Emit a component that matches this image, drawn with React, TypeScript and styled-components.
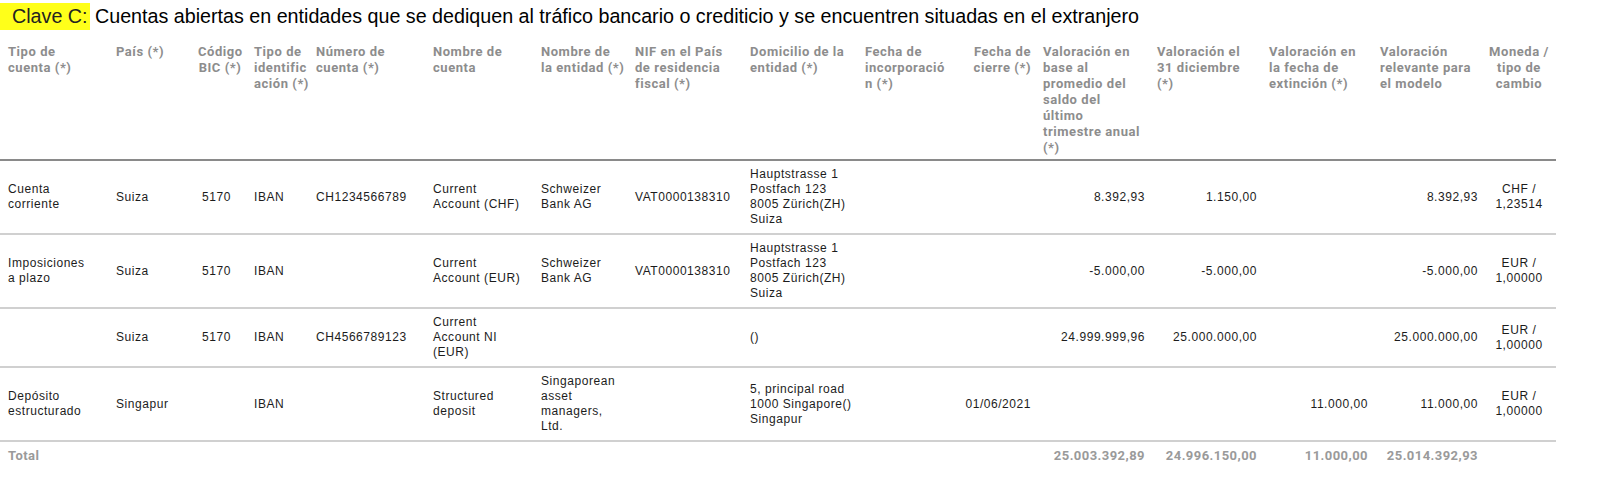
import styled, { createGlobalStyle } from "styled-components";

const GlobalStyle = createGlobalStyle`
  html, body {
    margin: 0;
    padding: 0;
    background: #ffffff;
    overflow: hidden;
  }
  body {
    font-family: "Liberation Sans", Arial, sans-serif;
    color: #1c1c1c;
  }
`;

type Align = "left" | "center" | "right";

interface Column {
    width: number;
    head: string[];
    headAlign?: Align;
    align?: Align;
}

const columns: Column[] = [
    { width: 108, head: ["Tipo de", "cuenta (*)"] },
    { width: 86, head: ["País (*)"] },
    { width: 52, head: ["Código", "BIC (*)"], headAlign: "center" },
    { width: 62, head: ["Tipo de", "identific", "ación (*)"] },
    { width: 117, head: ["Número de", "cuenta (*)"] },
    { width: 108, head: ["Nombre de", "cuenta"] },
    { width: 94, head: ["Nombre de", "la entidad (*)"] },
    { width: 115, head: ["NIF en el País", "de residencia", "fiscal (*)"] },
    { width: 115, head: ["Domicilio de la", "entidad (*)"] },
    { width: 93, head: ["Fecha de", "incorporació", "n (*)"] },
    { width: 85, head: ["Fecha de", "cierre (*)"], headAlign: "right", align: "right" },
    {
        width: 114,
        head: ["Valoración en", "base al", "promedio del", "saldo del", "último", "trimestre anual", "(*)"],
        align: "right",
    },
    { width: 112, head: ["Valoración el", "31 diciembre", "(*)"], align: "right" },
    { width: 111, head: ["Valoración en", "la fecha de", "extinción (*)"], align: "right" },
    { width: 110, head: ["Valoración", "relevante para", "el modelo"], align: "right" },
    { width: 74, head: ["Moneda /", "tipo de", "cambio"], headAlign: "center", align: "center" },
];

const rows: string[][] = [
    [
        "Cuenta\ncorriente",
        "Suiza",
        "5170",
        "IBAN",
        "CH1234566789",
        "Current\nAccount (CHF)",
        "Schweizer\nBank AG",
        "VAT0000138310",
        "Hauptstrasse 1\nPostfach 123\n8005 Zürich(ZH)\nSuiza",
        "",
        "",
        "8.392,93",
        "1.150,00",
        "",
        "8.392,93",
        "CHF /\n1,23514",
    ],
    [
        "Imposiciones\na plazo",
        "Suiza",
        "5170",
        "IBAN",
        "",
        "Current\nAccount (EUR)",
        "Schweizer\nBank AG",
        "VAT0000138310",
        "Hauptstrasse 1\nPostfach 123\n8005 Zürich(ZH)\nSuiza",
        "",
        "",
        "-5.000,00",
        "-5.000,00",
        "",
        "-5.000,00",
        "EUR /\n1,00000",
    ],
    [
        "",
        "Suiza",
        "5170",
        "IBAN",
        "CH4566789123",
        "Current\nAccount NI\n(EUR)",
        "",
        "",
        "()",
        "",
        "",
        "24.999.999,96",
        "25.000.000,00",
        "",
        "25.000.000,00",
        "EUR /\n1,00000",
    ],
    [
        "Depósito\nestructurado",
        "Singapur",
        "",
        "IBAN",
        "",
        "Structured\ndeposit",
        "Singaporean\nasset\nmanagers,\nLtd.",
        "",
        "5, principal road\n1000 Singapore()\nSingapur",
        "",
        "01/06/2021",
        "",
        "",
        "11.000,00",
        "11.000,00",
        "EUR /\n1,00000",
    ],
];

const totals: string[] = [
    "Total", "", "", "", "", "", "", "", "", "", "",
    "25.003.392,89",
    "24.996.150,00",
    "11.000,00",
    "25.014.392,93",
    "",
];

const Page = styled.div`
    padding-top: 3px;
`;

const Title = styled.h2`
    margin: 0;
    height: 35px;
    font-family: "Liberation Sans", Arial, sans-serif;
    font-weight: normal;
    font-size: 19.7px;
    line-height: 27px;
    color: #000;
    white-space: nowrap;
`;

const Highlight = styled.span`
    display: inline-block;
    background: #ffff1a;
    padding: 0 2px 0 12px;
    color: #222;
`;

const Table = styled.table`
    width: 1556px;
    border-collapse: collapse;
    table-layout: fixed;
`;

const Col = styled.col<{ $width: number }>`
    width: ${(p) => p.$width}px;
`;

const HeadCell = styled.th<{ $align: Align }>`
    padding: 6px 4px 3px ${(p) => (p.$align === "center" ? "4px" : "8px")};
    vertical-align: top;
    text-align: ${(p) => p.$align};
    font-family: Roboto, "Liberation Sans", sans-serif;
    font-weight: 700;
    font-size: 13px;
    line-height: 16px;
    letter-spacing: 0.55px;
    color: #8d8d8d;
    border-bottom: 2px solid #8a8a8a;
`;

const HeadLine = styled.span`
    display: block;
    white-space: nowrap;
`;

const BodyRow = styled.tr`
    border-bottom: 2px solid #d0d0d0;
`;

const Cell = styled.td<{ $align: Align }>`
    padding: 6px 4px 6px ${(p) => (p.$align === "center" ? "4px" : "8px")};
    vertical-align: middle;
    text-align: ${(p) => p.$align};
    font-size: 12px;
    line-height: 15px;
    letter-spacing: 0.55px;
    color: #1c1c1c;
    white-space: pre-line;
`;

const TotalCell = styled.td<{ $align: Align }>`
    padding: 6px 4px 4px 8px;
    text-align: ${(p) => p.$align};
    font-family: Roboto, "Liberation Sans", sans-serif;
    font-weight: 700;
    font-size: 13px;
    line-height: 16px;
    letter-spacing: 0.45px;
    color: #9a9a9a;
`;

export default function App() {
    return (
        <Page>
            <GlobalStyle />
            <Title>
                <Highlight>Clave C:</Highlight> Cuentas abiertas en entidades que se dediquen al
                tráfico bancario o crediticio y se encuentren situadas en el extranjero
            </Title>
            <Table>
                <colgroup>
                    {columns.map((c, i) => (
                        <Col key={i} $width={c.width} />
                    ))}
                </colgroup>
                <thead>
                    <tr>
                        {columns.map((c, i) => (
                            <HeadCell key={i} $align={c.headAlign ?? "left"}>
                                {c.head.map((line, j) => (
                                    <HeadLine key={j}>{line}</HeadLine>
                                ))}
                            </HeadCell>
                        ))}
                    </tr>
                </thead>
                <tbody>
                    {rows.map((row, r) => (
                        <BodyRow key={r}>
                            {row.map((value, i) => (
                                <Cell key={i} $align={columns[i].align ?? "left"}>
                                    {value}
                                </Cell>
                            ))}
                        </BodyRow>
                    ))}
                    <tr>
                        {totals.map((value, i) => (
                            <TotalCell key={i} $align={columns[i].align ?? "left"}>
                                {value}
                            </TotalCell>
                        ))}
                    </tr>
                </tbody>
            </Table>
        </Page>
    );
}
